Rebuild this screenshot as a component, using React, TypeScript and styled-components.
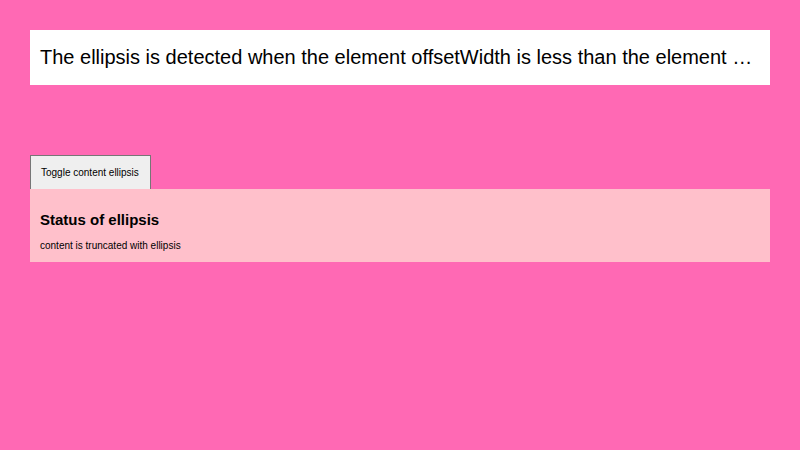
import React, { useState } from "react";
import styled, { createGlobalStyle } from "styled-components";

const GlobalStyle = createGlobalStyle`
  html, body {
    margin: 0;
    padding: 0;
    background: #ff69b4;
    font-family: "Liberation Sans", Arial, sans-serif;
  }
`;

const Page = styled.div`
  padding: 30px;
  display: flex;
  flex-direction: column;
`;

const Content = styled.div<{ $ellipsis: boolean }>`
  background: #fff;
  padding: 16px 10px;
  font-size: 20px;
  line-height: 23px;
  color: #000;
  white-space: ${(p) => (p.$ellipsis ? "nowrap" : "normal")};
  overflow: hidden;
  text-overflow: ellipsis;
  margin-bottom: 70px;
`;

const ToggleButton = styled.button`
  align-self: flex-start;
  font-family: "Liberation Sans", Arial, sans-serif;
  font-size: 10px;
  height: 34px;
  padding: 0 11px 0 10px;
  background: #efefef;
  border: 1px solid #767676;
  border-bottom: none;
  color: #000;
  cursor: pointer;
`;

const Status = styled.div`
  background: #ffc0cb;
  padding: 10px;
  color: #000;
`;

const StatusTitle = styled.h3`
  font-size: 15px;
  line-height: 17px;
  font-weight: bold;
  margin: 12px 0;
`;

const StatusText = styled.p`
  font-size: 10px;
  line-height: 12px;
  margin: 0;
`;

export default function App() {
  const [ellipsis, setEllipsis] = useState(true);
  return (
    <Page>
      <GlobalStyle />
      <Content $ellipsis={ellipsis}>
        The ellipsis is detected when the element offsetWidth is less than the
        element scrollWidth, which means the content overflows its container.
      </Content>
      <ToggleButton onClick={() => setEllipsis(!ellipsis)}>
        Toggle content ellipsis
      </ToggleButton>
      <Status>
        <StatusTitle>Status of ellipsis</StatusTitle>
        <StatusText>
          {ellipsis
            ? "content is truncated with ellipsis"
            : "content is not truncated"}
        </StatusText>
      </Status>
    </Page>
  );
}
